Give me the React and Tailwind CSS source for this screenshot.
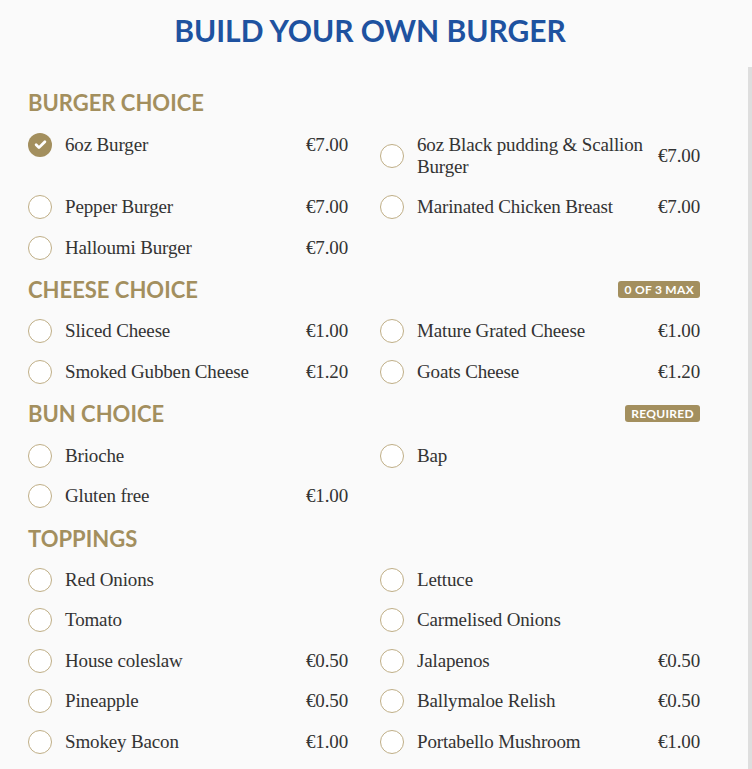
import React from 'react';

const sections = [
    {
        title: 'Burger Choice',
        rows: [
            [{ name: '6oz Burger', price: '€7.00', checked: true }, { name: '6oz Black pudding & Scallion Burger', price: '€7.00' }],
            [{ name: 'Pepper Burger', price: '€7.00' }, { name: 'Marinated Chicken Breast', price: '€7.00' }],
            [{ name: 'Halloumi Burger', price: '€7.00' }, null],
        ],
    },
    {
        title: 'Cheese Choice',
        badge: '0 of 3 max',
        rows: [
            [{ name: 'Sliced Cheese', price: '€1.00' }, { name: 'Mature Grated Cheese', price: '€1.00' }],
            [{ name: 'Smoked Gubben Cheese', price: '€1.20' }, { name: 'Goats Cheese', price: '€1.20' }],
        ],
    },
    {
        title: 'Bun Choice',
        badge: 'Required',
        rows: [
            [{ name: 'Brioche' }, { name: 'Bap' }],
            [{ name: 'Gluten free', price: '€1.00' }, null],
        ],
    },
    {
        title: 'Toppings',
        rows: [
            [{ name: 'Red Onions' }, { name: 'Lettuce' }],
            [{ name: 'Tomato' }, { name: 'Carmelised Onions' }],
            [{ name: 'House coleslaw', price: '€0.50' }, { name: 'Jalapenos', price: '€0.50' }],
            [{ name: 'Pineapple', price: '€0.50' }, { name: 'Ballymaloe Relish', price: '€0.50' }],
            [{ name: 'Smokey Bacon', price: '€1.00' }, { name: 'Portabello Mushroom', price: '€1.00' }],
            [{ name: 'Fried Egg', price: '€1.00' }, { name: 'Onion Rings', price: '€1.00' }],
        ],
    },
];

const Option = ({ item }) => {
    if (!item) return <div />;
    return (
        <div className="flex items-center py-[9.25px] self-start">
            {item.checked ? (
                <span className="w-[24px] h-[24px] -my-px rounded-full bg-[#a38f5e] flex items-center justify-center shrink-0">
                    <svg width="15" height="15" viewBox="0 0 24 24" fill="none" stroke="white" strokeWidth="4.5" strokeLinecap="round" strokeLinejoin="round">
                        <path d="M5 12.5l4.5 4.5L19 7.5" />
                    </svg>
                </span>
            ) : (
                <span className="w-[24px] h-[24px] -my-px rounded-full border border-[#bfae86] bg-white shrink-0" />
            )}
            <span className="flex-1 ml-[13px] pr-[3px] text-[19px] leading-[22px] tracking-[-0.15px] text-[#333333]">{item.name}</span>
            {item.price && <span className="text-[19px] leading-[22px] tracking-[-0.15px] text-[#333333]">{item.price}</span>}
        </div>
    );
};

export default function App() {
    return (
        <div className="flex bg-[#fafafa] min-h-[769px]" style={{ fontFamily: '"Liberation Serif", serif' }}>
            <div className="flex-1 px-[28px] pt-[14px]">
                <h1 className="text-center pr-[8px] text-[30px] leading-[32px] font-bold text-[#1e52a0]" style={{ fontFamily: 'Lato, sans-serif' }}>
                    BUILD YOUR OWN BURGER
                </h1>
                <div className="mt-[35px] w-[672px]">
                    {sections.map(section => (
                        <div key={section.title}>
                            <div className="h-[43.3px] flex items-center justify-between" style={{ fontFamily: 'Lato, sans-serif' }}>
                                <h2 className="text-[22px] font-bold uppercase text-[#a38f5e]">{section.title}</h2>
                                {section.badge && (
                                    <span className="bg-[#a38f5e] text-white text-[12px] font-bold uppercase tracking-[0.3px] rounded-[3px] px-[6px] leading-[17px]">
                                        {section.badge}
                                    </span>
                                )}
                            </div>
                            <div className="grid grid-cols-2 gap-x-[32px]">
                                {section.rows.map((row, i) => (
                                    <React.Fragment key={i}>
                                        <Option item={row[0]} />
                                        <Option item={row[1]} />
                                    </React.Fragment>
                                ))}
                            </div>
                        </div>
                    ))}
                </div>
            </div>
            <div className="w-[4px] mt-[67px] bg-[#dedede]" />
        </div>
    );
}
